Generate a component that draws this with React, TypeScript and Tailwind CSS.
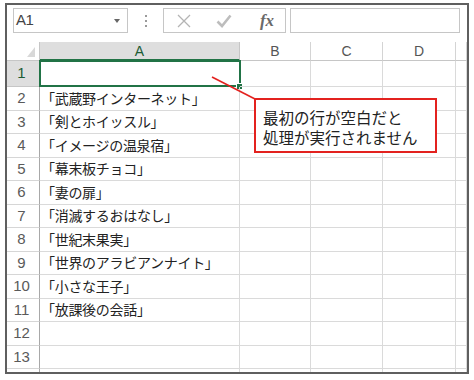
import React from "react";

const cols = [
  { label: "A", w: "w-[200px]" },
  { label: "B", w: "w-[71px]" },
  { label: "C", w: "w-[72px]" },
  { label: "D", w: "w-[73px]" },
  { label: "", w: "flex-1" },
];

const titles = [
  "",
  "「武蔵野インターネット」",
  "「剣とホイッスル」",
  "「イメージの温泉宿」",
  "「幕末板チョコ」",
  "「妻の扉」",
  "「消滅するおはなし」",
  "「世紀末果実」",
  "「世界のアラビアンナイト」",
  "「小さな王子」",
  "「放課後の会話」",
  "",
  "",
  "",
];

function Toolbar() {
  return (
    <div className="flex h-[37px] shrink-0 items-start pt-[3px] text-[#444]">
      {/* name box */}
      <div className="ml-[6px] flex h-[25px] w-[115px] items-center justify-between border border-[#c6c6c6] pl-[2px] pr-[7px]">
        <span className="text-[15px] tracking-[-0.5px]">A1</span>
        <span className="h-0 w-0 border-x-[3.5px] border-t-[4px] border-x-transparent border-t-[#666]" />
      </div>
      <div className="flex h-[25px] w-[35px] flex-col items-center justify-center gap-[3px]">
        <span className="h-[2px] w-[2px] bg-[#9a9a9a]" />
        <span className="h-[2px] w-[2px] bg-[#9a9a9a]" />
        <span className="h-[2px] w-[2px] bg-[#9a9a9a]" />
      </div>
      {/* cancel / enter / fx */}
      <div className="flex h-[25px] w-[123px] items-center border border-[#c6c6c6]">
        <div className="flex w-[40px] justify-center">
          <svg width="14" height="14" viewBox="0 0 14 14">
            <path d="M1 1 L13 13 M13 1 L1 13" stroke="#b4b4b4" strokeWidth="1.3" fill="none" />
          </svg>
        </div>
        <div className="flex w-[40px] justify-center">
          <svg width="16" height="14" viewBox="0 0 16 14">
            <path d="M1.5 7.5 L6 12 L14.5 1.5" stroke="#bdbdbd" strokeWidth="2.6" fill="none" />
          </svg>
        </div>
        <div className="flex flex-1 justify-center pl-[5px]">
          <span className="font-['Liberation_Serif',serif] text-[17px] font-bold italic leading-none text-[#6a6a6a]">
            fx
          </span>
        </div>
      </div>
      <div className="ml-[4px] h-[25px] w-[170px] border border-[#c6c6c6]" />
    </div>
  );
}

function HeaderRow() {
  return (
    <div className="flex h-[19px] shrink-0">
      <div className="relative w-[33px] shrink-0 border-b border-r border-[#c6c6c6]">
        <span className="absolute bottom-[3px] right-[4px] h-0 w-0 border-b-[10px] border-l-[8px] border-b-[#d8d8d8] border-l-transparent" />
      </div>
      {cols.map((c, i) => (
        <div
          key={i}
          className={`${c.w} flex shrink-0 items-center justify-center border-r text-[14px] leading-none ${
            i === 0
              ? "border-b-2 border-[#c6c6c6] border-b-[#217346] bg-[#dedede] text-[#1d5c35]"
              : "border-b border-[#d4d4d4] border-b-[#c6c6c6] text-[#555]"
          }`}
        >
          {c.label}
        </div>
      ))}
    </div>
  );
}

function Row({ n, text }: { n: number; text: string }) {
  const first = n === 1;
  return (
    <div className={`flex shrink-0 ${first ? "h-[26px]" : "h-[23.5px]"}`}>
      <div
        className={`flex w-[33px] shrink-0 items-center justify-center border-b border-r pr-[3px] text-[15px] ${
          first
            ? "border-[#c6c6c6] border-r-[#217346] bg-[#dedede] text-[#1d5c35]"
            : "border-[#d6d6d6] border-r-[#a8a8a8] text-[#5a5a5a]"
        }`}
      >
        {n}
      </div>
      {cols.map((c, i) => (
        <div
          key={i}
          className={`${c.w} relative flex shrink-0 items-center border-b border-r border-[#dadada]`}
        >
          {i === 0 && (
            <span className="whitespace-nowrap pl-[1px] font-['Noto_Sans_CJK_JP',sans-serif] text-[14px] tracking-[-0.3px] text-[#222]">
              {text}
            </span>
          )}
          {i === 0 && first && (
            <>
              <div className="absolute -left-[1px] -top-[1px] h-[27px] w-[202px] border-2 border-[#217346]" />
              <div className="absolute -bottom-[4px] -right-[4px] h-[7px] w-[7px] border border-white bg-[#217346]" />
            </>
          )}
        </div>
      ))}
    </div>
  );
}

function Callout() {
  return (
    <>
      <svg className="pointer-events-none absolute left-0 top-0" width="474" height="380">
        <line x1="212" y1="77" x2="255" y2="99" stroke="#e3221f" strokeWidth="1.6" />
      </svg>
      <div className="absolute left-[254px] top-[98px] h-[55px] w-[183px] border-2 border-[#e3221f] bg-white pl-[7px] pt-[7px] font-['Noto_Sans_CJK_JP',sans-serif] text-[15.5px] leading-[20px] text-[#222]">
        <p className="whitespace-nowrap">最初の行が空白だと</p>
        <p className="whitespace-nowrap">処理が実行されません</p>
      </div>
    </>
  );
}

export default function App() {
  return (
    <div className="relative h-[380px] w-[474px] overflow-hidden bg-white font-['Liberation_Sans',sans-serif]">
      <div className="ml-[5px] mt-[3px] flex h-[371px] w-[464px] flex-col overflow-hidden border-2 border-[#5f5f5f]">
        <Toolbar />
        <HeaderRow />
        {titles.map((t, i) => (
          <Row key={i} n={i + 1} text={t} />
        ))}
      </div>
      <Callout />
    </div>
  );
}
